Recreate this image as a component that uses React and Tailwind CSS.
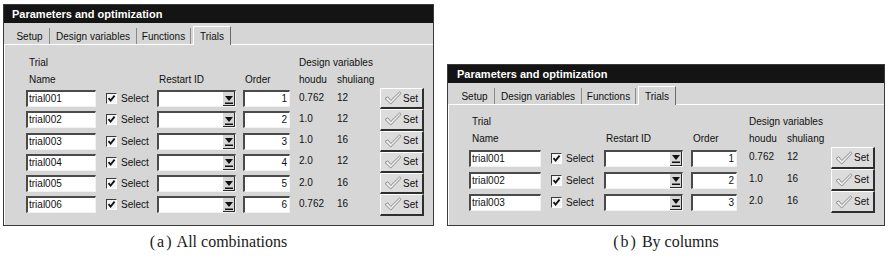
import React from "react";

const UI = { fontFamily: '"Liberation Sans", Arial, sans-serif' };
const CAPTION = { fontFamily: '"Liberation Serif", "Times New Roman", serif' };

const rowsA = [
  ["trial001", "1", "0.762", "12"],
  ["trial002", "2", "1.0", "12"],
  ["trial003", "3", "1.0", "16"],
  ["trial004", "4", "2.0", "12"],
  ["trial005", "5", "2.0", "16"],
  ["trial006", "6", "0.762", "16"],
];

const rowsB = [
  ["trial001", "1", "0.762", "12"],
  ["trial002", "2", "1.0", "16"],
  ["trial003", "3", "2.0", "16"],
];

const LAYOUT_A = {
  size: "w-[431px] h-[222px]",
  title: "pl-[8px]",
  tabs: "pl-[6px]",
  pad: "pl-[21px]",
  name: "w-[70px]",
  check: "w-[61px]",
  combo: "w-[79px]",
  order: "ml-[7px] w-[47px]",
  houdu: "ml-[9px] w-[38px]",
  shu: "w-[43px]",
  row: "h-[21.25px]",
  top: "pt-[8px]",
  head2: "h-[17px]",
};

const LAYOUT_B = {
  size: "w-[438px] h-[162px]",
  title: "pl-[9px]",
  tabs: "pl-[7px]",
  pad: "pl-[20px]",
  name: "w-[72px]",
  check: "w-[63px]",
  combo: "w-[79px]",
  order: "ml-[8px] w-[46px]",
  houdu: "ml-[12px] w-[38px]",
  shu: "w-[44px]",
  row: "h-[22px]",
  top: "pt-[7px]",
  head2: "h-[17px]",
};

const sunken =
  "h-[17px] bg-white border-t-2 border-l-2 border-t-[#4a4a4a] border-l-[#4a4a4a] border-b border-r border-b-[#f2f2f2] border-r-[#f2f2f2]";

function CheckBox() {
  return (
    <span className="w-[11px] h-[11px] bg-[#f4f4f4] border border-t-[#3a3a3a] border-l-[#3a3a3a] border-b-white border-r-white flex items-center justify-center">
      <svg width="9" height="9" viewBox="0 0 9 9">
        <path d="M1.5 4.2 L3.6 6.6 L7.6 1.6" fill="none" stroke="#111" strokeWidth="1.8" />
      </svg>
    </span>
  );
}

function SetButton() {
  return (
    <div className="w-[44px] h-full flex items-center bg-[#dcdcdc] border-t border-l border-t-white border-l-white border-r-2 border-b-2 border-r-[#2e2e2e] border-b-[#2e2e2e]">
      <svg width="18" height="14" viewBox="0 0 18 14" className="ml-[3px]">
        <path
          d="M1 7.5 L3.8 5.8 L6.8 9.5 L15.5 1 L17 2.3 L6.8 13 Z"
          fill="#ededed"
          stroke="#8c8c8c"
          strokeWidth="1"
          strokeLinejoin="round"
        />
      </svg>
      <span className="ml-auto mr-[4px] text-[10px] text-[#111]">Set</span>
    </div>
  );
}

function Row({ L, data }) {
  const [name, order, houdu, shu] = data;
  return (
    <div className={`flex items-center ${L.row}`}>
      <div className={`${sunken} ${L.name} text-[10px] leading-[14px] pl-[1px] text-[#111]`}>{name}</div>
      <div className={`${L.check} flex items-center`}>
        <span className="ml-[10px]">
          <CheckBox />
        </span>
        <span className="ml-[4px] text-[10px] text-[#111]">Select</span>
      </div>
      <div className={`${sunken} ${L.combo} flex justify-end`}>
        <div className="w-[12px] h-full bg-[#d6d6d6] border-r border-b border-r-[#2a2a2a] border-b-[#2a2a2a] flex items-center justify-center">
          <svg width="8" height="10" viewBox="0 0 8 10">
            <path d="M0 2 L8 2 L4 7 Z" fill="#111" />
            <rect x="0" y="8.5" width="8" height="1.5" fill="#111" />
          </svg>
        </div>
      </div>
      <div className={`${sunken} ${L.order} text-[10px] leading-[14px] text-right pr-[2px] text-[#111]`}>{order}</div>
      <div className={`${L.houdu} text-[10px] pb-[3px] text-[#111]`}>{houdu}</div>
      <div className={`${L.shu} text-[10px] pb-[3px] text-[#111]`}>{shu}</div>
      <SetButton />
    </div>
  );
}

function Panel({ L, rows }) {
  const tabs = [
    ["Setup", "w-[40px]"],
    ["Design variables", "w-[87px]"],
    ["Functions", "w-[54px]"],
  ];
  return (
    <div className={`${L.size} flex flex-col border border-[#3a3a3a] bg-[#d6d6d6]`} style={UI}>
      <div className={`h-[18px] bg-[#141414] text-white font-bold text-[11px] leading-[18px] ${L.title}`}>
        Parameters and optimization
      </div>
      <div className={`h-[22px] flex items-end ${L.tabs} border-b border-b-white`}>
        {tabs.map(([t, w]) => (
          <div
            key={t}
            className={`${w} h-[16px] flex items-center justify-center border-r border-r-[#8a8a8a] text-[10px] text-[#111]`}
          >
            {t}
          </div>
        ))}
        <div className="w-[38px] h-[19px] ml-[2px] mb-[-1px] flex items-center justify-center bg-[#d6d6d6] border-t border-l border-t-white border-l-white border-r border-r-[#6a6a6a] text-[10px] text-[#111]">
          Trials
        </div>
      </div>
      <div className={`flex-1 ${L.top} ${L.pad} border-l border-l-white`}>
        <div className="flex items-center h-[18px] text-[10px] text-[#111]">
          <div className={`${L.name} pl-[3px]`}>Trial</div>
          <div className={L.check} />
          <div className={L.combo} />
          <div className={L.order} />
          <div className={`${L.houdu} whitespace-nowrap`}>Design variables</div>
        </div>
        <div className={`flex items-center ${L.head2} text-[10px] text-[#111]`}>
          <div className={`${L.name} pl-[3px]`}>Name</div>
          <div className={L.check} />
          <div className={`${L.combo} pl-[2px]`}>Restart ID</div>
          <div className={`${L.order} pl-[2px]`}>Order</div>
          <div className={L.houdu}>houdu</div>
          <div className={L.shu}>shuliang</div>
        </div>
        {rows.map((r) => (
          <Row key={r[0]} L={L} data={r} />
        ))}
      </div>
    </div>
  );
}

function Caption({ tag, text }) {
  return (
    <div className="mt-[6px] h-[20px] leading-[20px] text-center text-[16px] text-[#1a1a1a]" style={CAPTION}>
      <span className="tracking-[2px]">({tag})</span> {text}
    </div>
  );
}

export default function App() {
  return (
    <div className="w-[890px] h-[263px] bg-white flex items-start pl-[3px] pt-[4px] overflow-hidden">
      <div className="flex flex-col w-[431px]">
        <Panel L={LAYOUT_A} rows={rowsA} />
        <Caption tag="a" text="All combinations" />
      </div>
      <div className="flex flex-col w-[438px] ml-[13px] mt-[60px]">
        <Panel L={LAYOUT_B} rows={rowsB} />
        <Caption tag="b" text="By columns" />
      </div>
    </div>
  );
}
